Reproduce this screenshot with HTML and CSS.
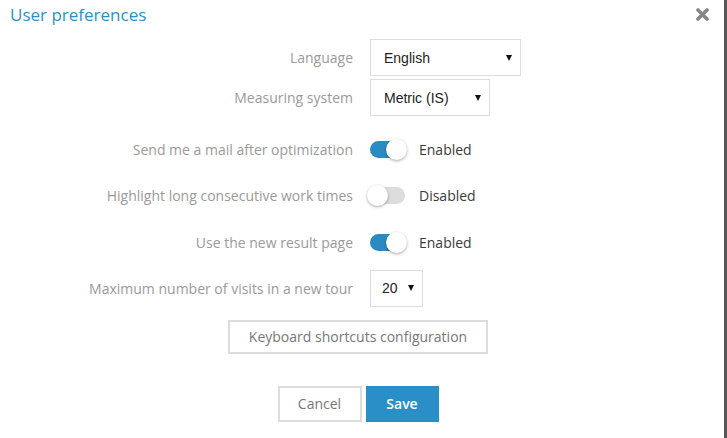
FILE: index.html
```html
<!DOCTYPE html>
<html lang="en">
<head>
  <meta charset="UTF-8">
  <title>User preferences</title>
  <link rel="stylesheet" href="styles.css">
</head>
<body>
  <div class="dialog">
    <div class="header">
      <h1 class="title">User preferences</h1>
      <span class="close">
        <svg width="13" height="13" viewBox="0 0 13 13"><path d="M2 2 L11 11 M11 2 L2 11" stroke="#878787" stroke-width="3.6" stroke-linecap="round"/></svg>
      </span>
    </div>

    <div class="form">
      <div class="row row-lang">
        <label class="label">Language</label>
        <div class="select select-lang"><span>English</span><i class="caret"></i></div>
      </div>
      <div class="row row-units">
        <label class="label">Measuring system</label>
        <div class="select select-units"><span>Metric (IS)</span><i class="caret"></i></div>
      </div>
      <div class="row row-toggle">
        <label class="label">Send me a mail after optimization</label>
        <div class="toggle on"><span class="knob"></span></div>
        <span class="state">Enabled</span>
      </div>
      <div class="row row-toggle">
        <label class="label">Highlight long consecutive work times</label>
        <div class="toggle"><span class="knob"></span></div>
        <span class="state">Disabled</span>
      </div>
      <div class="row row-toggle">
        <label class="label">Use the new result page</label>
        <div class="toggle on"><span class="knob"></span></div>
        <span class="state">Enabled</span>
      </div>
      <div class="row row-visits">
        <label class="label">Maximum number of visits in a new tour</label>
        <div class="select select-visits"><span>20</span><i class="caret"></i></div>
      </div>
      <div class="center row-shortcuts">
        <button class="btn btn-outline btn-shortcuts">Keyboard shortcuts configuration</button>
      </div>
      <div class="center footer">
        <button class="btn btn-outline btn-cancel">Cancel</button>
        <button class="btn btn-primary btn-save">Save</button>
      </div>
    </div>
  </div>
</body>
</html>
```

FILE: styles.css
```css
body, html {
  margin: 0;
  padding: 0;
  font-family: "Open Sans", sans-serif;
  background: #fff;
}

.dialog {
  width: 727px;
  height: 438px;
  box-sizing: border-box;
  border-right: 3px solid #585858;
  overflow: hidden;
}

.header {
  display: flex;
  justify-content: space-between;
  align-items: flex-start;
  padding: 3px 15px 0 10px;
  height: 36px;
  box-sizing: border-box;
}

.title {
  margin: 0;
  font-size: 17px;
  font-weight: 400;
  line-height: 24px;
  color: #2b92c9;
}

.close {
  margin-top: 5px;
  line-height: 0;
}

.form {
  width: 716px;
}

.row {
  display: flex;
  align-items: center;
}

.label {
  flex: 0 0 370px;
  padding-right: 17px;
  box-sizing: border-box;
  text-align: right;
  font-size: 14px;
  color: #9a9a9a;
}

.row-lang { margin-top: 3px; height: 37px; }
.row-units { margin-top: 3px; height: 37px; }
.row-toggle { height: 46.5px; }
.row-units + .row-toggle { margin-top: 10px; }
.row-visits { margin-top: 4px; height: 37px; }

.select {
  height: 37px;
  box-sizing: border-box;
  border: 1px solid #ddd;
  display: flex;
  align-items: center;
  justify-content: space-between;
  padding: 0 8px 0 13px;
  font-family: "Liberation Sans", Arial, sans-serif;
  font-size: 14px;
  color: #222;
}

.select-lang { width: 151px; }
.select-units { width: 120px; }
.select-visits { width: 53px; padding-left: 11px; }

.caret {
  width: 0;
  height: 0;
  border-left: 3px solid transparent;
  border-right: 3px solid transparent;
  border-top: 6px solid #111;
}

.toggle {
  position: relative;
  flex: 0 0 35px;
  height: 17px;
  border-radius: 9px;
  background: #ddd;
}

.toggle.on {
  background: #2a8bc3;
}

.knob {
  position: absolute;
  top: -2px;
  left: -3px;
  width: 21px;
  height: 21px;
  border-radius: 50%;
  background: #fff;
  box-shadow: 0 1px 3px rgba(0, 0, 0, 0.35);
}

.toggle.on .knob {
  left: auto;
  right: -2px;
}

.state {
  margin-left: 14px;
  font-size: 14px;
  color: #3a3a3a;
}

.center {
  display: flex;
  justify-content: center;
}

.row-shortcuts {
  margin-top: 13px;
}

.footer {
  margin-top: 32px;
  gap: 4px;
}

.btn {
  font-family: "Open Sans", sans-serif;
  font-size: 14px;
  cursor: pointer;
  box-sizing: border-box;
}

.btn-outline {
  background: #fff;
  border: 2px solid #ddd;
  color: #777;
}

.btn-shortcuts {
  width: 260px;
  height: 34px;
}

.btn-cancel {
  width: 84px;
  height: 36px;
}

.btn-primary {
  background: #2a8fc7;
  border: none;
  color: #fff;
  font-weight: 600;
}

.btn-save {
  width: 73px;
  height: 36px;
}
```
